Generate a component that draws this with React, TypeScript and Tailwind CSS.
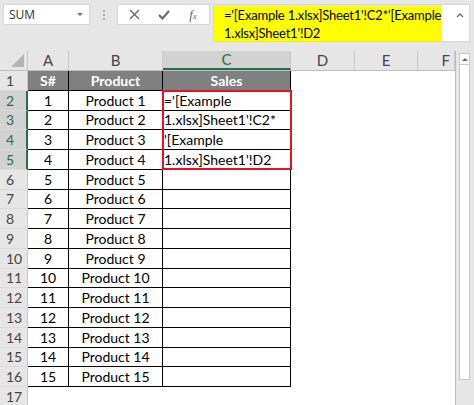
import React from 'react';

const cellFont = { fontFamily: 'Lato, "Open Sans", sans-serif' };

const rows = Array.from({ length: 15 }, (_, i) => ({
  n: i + 1,
  product: `Product ${i + 1}`,
}));

const cText: Record<number, string> = {
  0: "='[Example",
  1: "1.xlsx]Sheet1'!C2*",
  2: "'[Example",
  3: "1.xlsx]Sheet1'!D2",
};

function RowHead({ n, selected }: { n: number; selected?: boolean }) {
  return (
    <div
      className={
        'w-[28px] shrink-0 flex items-center pl-[6px] text-[14px] border-b border-[#dadada] ' +
        (selected
          ? 'bg-[#d2d2d2] text-[#217346] border-r-2 border-r-[#217346]'
          : 'bg-[#e6e6e6] text-[#444] border-r border-r-[#c8c8c8]')
      }
    >
      {n}
    </div>
  );
}

export default function App() {
  return (
    <div className="w-[474px] h-[405px] overflow-hidden bg-[#e6e6e6] relative" style={cellFont}>
      {/* formula bar */}
      <div className="h-[51px] flex items-start pt-[4px] pl-[3px]">
        <div
          className="w-[87px] h-[21px] bg-white border border-[#d6d6d6] flex items-center justify-between pl-[5px] pr-[6px]"
          style={{ fontFamily: '"Open Sans", sans-serif' }}
        >
          <span className="text-[12px] text-[#333]">SUM</span>
          <span className="w-0 h-0 border-l-[3px] border-r-[3px] border-t-[3px] border-l-transparent border-r-transparent border-t-[#777]" />
        </div>
        <div className="w-[27px] h-[21px] flex flex-col items-center justify-center gap-[2px]">
          <span className="w-[2px] h-[2px] bg-[#aaa]" />
          <span className="w-[2px] h-[2px] bg-[#aaa]" />
          <span className="w-[2px] h-[2px] bg-[#aaa]" />
        </div>
        <div className="w-[93px] h-[21px] bg-white border border-[#d6d6d6] flex items-center text-[#555]">
          <div className="w-[32px] flex justify-center">
            <svg width="11" height="11" viewBox="0 0 11 11">
              <path d="M1 1 L10 10 M10 1 L1 10" stroke="#666" strokeWidth="1.4" />
            </svg>
          </div>
          <div className="w-[28px] flex justify-center">
            <svg width="12" height="10" viewBox="0 0 12 10">
              <path d="M1 5 L4.5 8.5 L11 1" stroke="#666" strokeWidth="2" fill="none" />
            </svg>
          </div>
          <div className="w-[30px] flex justify-center">
            <span className="italic text-[13px] text-[#666]" style={{ fontFamily: '"Liberation Serif", serif' }}>
              f<span className="text-[9px]">x</span>
            </span>
          </div>
        </div>
        <div className="ml-[3px] w-[257px] h-[38px] bg-white border border-[#d6d6d6] flex">
          <div className="w-[228px] h-full bg-[#ffff00] pl-[10px] pt-[1px] text-[13px] tracking-[-0.2px] leading-[18px] text-black whitespace-nowrap">
            <div>='[Example 1.xlsx]Sheet1'!C2*'[Example</div>
            <div>1.xlsx]Sheet1'!D2</div>
          </div>
          <div className="flex-1 flex justify-center pt-[7px] pl-[8px]">
            <svg width="8" height="6" viewBox="0 0 8 6">
              <path d="M1 5 L4 2 L7 5" stroke="#666" strokeWidth="1.3" fill="none" />
            </svg>
          </div>
        </div>
      </div>

      {/* sheet */}
      <div className="flex h-[354px]">
        <div className="w-[455px] relative bg-white">
          {/* column headers */}
          <div className="flex h-[20px] bg-[#e6e6e6] text-[15px] text-[#444] border-b border-[#bdbdbd]">
            <div className="w-[28px] shrink-0 flex items-end justify-end pr-[3px] pb-[3px] border-r border-[#c8c8c8]">
              <span className="w-0 h-0 border-b-[13px] border-l-[13px] border-b-[#b4b4b4] border-l-transparent" />
            </div>
            <div className="w-[41px] flex items-center justify-center border-r border-[#c8c8c8]">A</div>
            <div className="w-[94px] flex items-center justify-center border-r border-[#c8c8c8]">B</div>
            <div className="w-[128px] flex items-center justify-center border-r border-[#c8c8c8] bg-[#d2d2d2] text-[#217346] border-b-2 border-b-[#217346]">C</div>
            <div className="w-[64px] flex items-center justify-center border-r border-[#c8c8c8]">D</div>
            <div className="w-[63px] flex items-center justify-center border-r border-[#c8c8c8]">E</div>
            <div className="w-[37px] flex items-center justify-end pr-[4px] border-r border-[#c8c8c8]">F</div>
          </div>

          {/* header data row */}
          <div className="flex h-[19.75px]">
            <RowHead n={1} />
            <div className="w-[41px] flex items-center justify-center bg-[#808080] text-white font-bold text-[14px] border-r border-b border-black">S#</div>
            <div className="w-[94px] flex items-center justify-center bg-[#808080] text-white font-bold text-[14px] border-r border-b border-black">Product</div>
            <div className="w-[128px] flex items-center justify-center bg-[#808080] text-white font-bold text-[14px] border-r border-b border-black">Sales</div>
            <div className="flex-1" />
          </div>

          {rows.map((r, i) => (
            <div key={r.n} className="flex h-[19.75px]">
              <RowHead n={r.n + 1} selected={i < 4} />
              <div className="w-[41px] flex items-center justify-center text-[14px] text-black border-r border-b border-black">{r.n}</div>
              <div className="w-[94px] flex items-center justify-center text-[14px] text-black border-r border-b border-black">{r.product}</div>
              <div className="w-[128px] flex items-center pl-[1px] text-[14px] text-black border-r border-b border-black whitespace-nowrap">
                {cText[i] ?? ''}
              </div>
              <div className="flex-1" />
            </div>
          ))}

          <div className="flex h-[19px]">
            <RowHead n={17} />
            <div className="flex-1" />
          </div>

          {/* selection outline */}
          <div className="absolute left-[162px] top-[39px] w-[130px] h-[80px] border-2 border-[#e81123] pointer-events-none" />
        </div>

        {/* vertical scrollbar */}
        <div className="w-[19px] bg-[#e6e6e6] border-l border-[#bdbdbd] pl-[3px] pr-[4px] pt-[2px] flex flex-col">
          <div className="h-[12px] bg-white border border-[#c8c8c8] flex items-center justify-center">
            <span className="w-0 h-0 border-l-[3px] border-r-[3px] border-b-[3px] border-l-transparent border-r-transparent border-b-[#666]" />
          </div>
          <div className="h-[315px] bg-white border border-[#c8c8c8] border-t-0" />
        </div>
      </div>
    </div>
  );
}
